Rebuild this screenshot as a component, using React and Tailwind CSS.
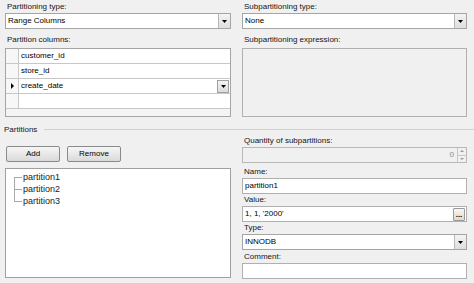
import React from "react";

const font = { fontFamily: '"Liberation Sans", Arial, sans-serif' };

function DownArrow() {
  return (
    <svg width="5" height="3" viewBox="0 0 5 3">
      <path d="M0 0 H5 L2.5 3 Z" fill="#000" />
    </svg>
  );
}

function DropButton() {
  return (
    <div className="w-[12px] h-full flex items-center justify-center border-l border-[#b8b8b8] bg-gradient-to-b from-[#f4f4f4] to-[#dedede]">
      <DownArrow />
    </div>
  );
}

function Label({ children, className = "" }) {
  return <div className={"h-[12px] leading-[12px] pl-[2px] text-[8px] text-[#141414] " + className}>{children}</div>;
}

function Combo({ value }) {
  return (
    <div className="h-[16px] flex border border-[#a5a5a5] bg-white">
      <div className="flex-1 pl-[2px] text-[8px] leading-[14px] text-black">{value}</div>
      <DropButton />
    </div>
  );
}

function TextBox({ value, children }) {
  return (
    <div className="h-[16px] flex border border-[#b0b0b0] bg-white">
      <div className="flex-1 pl-[2px] text-[8px] leading-[14px] text-black">{value}</div>
      {children}
    </div>
  );
}

function GridRow({ text, current }) {
  return (
    <div className="h-[15px] flex border-b border-[#c8c8c8] bg-white">
      <div className="w-[13px] flex items-center justify-center border-r border-[#c8c8c8] bg-[#f7f7f7]">
        {current && (
          <svg width="3" height="6" viewBox="0 0 3 6">
            <path d="M0 0 L3 3 L0 6 Z" fill="#000" />
          </svg>
        )}
      </div>
      <div className="flex-1 flex">
        <div className="flex-1 pl-[2px] text-[8px] leading-[14px] text-black">{text}</div>
        {current && (
          <div className="w-[12px] h-[13px] mt-[1px] mr-[1px] flex items-center justify-center border border-[#a0a0a0] bg-gradient-to-b from-[#f4f4f4] to-[#dcdcdc]">
            <DownArrow />
          </div>
        )}
      </div>
    </div>
  );
}

function WinButton({ children }) {
  return (
    <div className="w-[54px] h-[16px] flex items-center justify-center rounded-[2px] border border-[#8a8a8a] bg-gradient-to-b from-[#f6f6f6] to-[#dadada] text-[8px] text-black">
      {children}
    </div>
  );
}

function TreeItem({ text, first, last }) {
  return (
    <div className="h-[12px] flex items-center relative">
      <div
        className={
          "absolute left-[7px] w-px bg-[#a8a8a8] " +
          (first ? "top-[6px] h-[6px]" : last ? "top-0 h-[6px]" : "top-0 h-[12px]")
        }
      />
      <div className="ml-[7px] w-[8px] h-px bg-[#a8a8a8]" />
      <span className="pl-[1px] text-[9px] leading-[12px] text-[#222]">{text}</span>
    </div>
  );
}

export default function App() {
  return (
    <div className="w-[474px] h-[283px] bg-[#f0f0f0] overflow-hidden" style={font}>
      <div className="flex pl-[5px] pr-[7px] gap-[11px]">
        <div className="w-[226px] flex flex-col">
          <Label className="h-[13px] leading-[13px]">Partitioning type:</Label>
          <Combo value="Range Columns" />
          <Label className="mt-[4px] h-[13px] leading-[13px]">Partition columns:</Label>
          <div className="mt-[2px] h-[69px] border border-[#a5a5a5] bg-[#f4f4f4] flex flex-col">
            <GridRow text="customer_id" />
            <GridRow text="store_id" />
            <GridRow text="create_date" current />
            <GridRow text="" />
          </div>
        </div>
        <div className="w-[225px] flex flex-col">
          <Label className="h-[13px] leading-[13px]">Subpartitioning type:</Label>
          <Combo value="None" />
          <Label className="mt-[4px] h-[13px] leading-[13px]">Subpartitioning expression:</Label>
          <div className="mt-[2px] h-[69px] border border-[#b0b0b0] bg-[#f0f0f0]" />
        </div>
      </div>

      <div className="mt-[7px] h-[11px] flex items-center pl-[4px]">
        <span className="text-[8px] text-[#141414]">Partitions</span>
        <div className="ml-[7px] flex-1 h-px bg-[#d0d0d0]" />
      </div>

      <div className="flex pl-[5px] pr-[7px] gap-[11px]">
        <div className="w-[226px] flex flex-col">
          <div className="mt-[11px] flex gap-[7px] pl-[1px]">
            <WinButton>Add</WinButton>
            <WinButton>Remove</WinButton>
          </div>
          <div className="mt-[6px] h-[110px] border border-[#a0a0a0] bg-white pt-[2px] pl-[1px]">
            <TreeItem text="partition1" first />
            <TreeItem text="partition2" />
            <TreeItem text="partition3" last />
          </div>
        </div>
        <div className="w-[225px] flex flex-col">
          <Label>Quantity of subpartitions:</Label>
          <div className="h-[16px] flex border border-[#b8b8b8] bg-[#f0f0f0]">
            <div className="flex-1 pr-[3px] text-right text-[8px] leading-[14px] text-[#8a8a8a]">0</div>
            <div className="w-[9px] flex flex-col border-l border-[#c8c8c8]">
              <div className="flex-1 flex items-center justify-center border-b border-[#c8c8c8]">
                <svg width="4" height="2" viewBox="0 0 4 2"><path d="M0 2 L2 0 L4 2 Z" fill="#999" /></svg>
              </div>
              <div className="flex-1 flex items-center justify-center">
                <svg width="4" height="2" viewBox="0 0 4 2"><path d="M0 0 H4 L2 2 Z" fill="#999" /></svg>
              </div>
            </div>
          </div>
          <Label className="mt-[3px]">Name:</Label>
          <TextBox value="partition1" />
          <Label>Value:</Label>
          <TextBox value="1, 1, '2000'">
            <div className="w-[12px] h-[13px] my-auto mr-[1px] flex items-end justify-center pb-[3px] border border-[#9a9a9a] rounded-[1px] bg-gradient-to-b from-[#f6f6f6] to-[#dadada] text-[8px] leading-[4px] font-bold text-black">
              ...
            </div>
          </TextBox>
          <Label>Type:</Label>
          <Combo value="INNODB" />
          <Label className="mt-[1px]">Comment:</Label>
          <TextBox value="" />
        </div>
      </div>
    </div>
  );
}
